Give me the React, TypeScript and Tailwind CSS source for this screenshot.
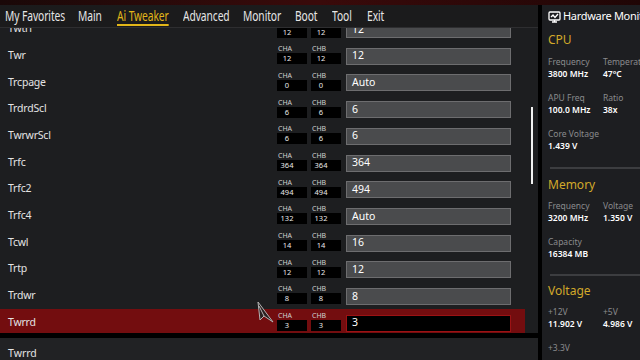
import React from "react"

const rows: [string, string, string, string][] = [
  ["Twtrl", "12", "12", "12"],
  ["Twr", "12", "12", "12"],
  ["Trcpage", "0", "0", "Auto"],
  ["TrdrdScl", "6", "6", "6"],
  ["TwrwrScl", "6", "6", "6"],
  ["Trfc", "364", "364", "364"],
  ["Trfc2", "494", "494", "494"],
  ["Trfc4", "132", "132", "Auto"],
  ["Tcwl", "14", "14", "16"],
  ["Trtp", "12", "12", "12"],
  ["Trdwr", "8", "8", "8"],
  ["Twrrd", "3", "3", "3"],
]

// tab label + width of its slot (start positions taken from the screen)
const tabs: [string, string][] = [
  ["My Favorites", "w-[73px]"],
  ["Main", "w-[39px]"],
  ["Ai Tweaker", "w-[66px]"],
  ["Advanced", "w-[60px]"],
  ["Monitor", "w-[52px]"],
  ["Boot", "w-[37px]"],
  ["Tool", "w-[35px]"],
  ["Exit", "w-[40px]"],
]

const Stat = ({ label, value }: { label: string; value: string }) => (
  <div className="w-[55px] shrink-0 flex flex-col">
    <span className="text-[8.5px] leading-[13px] text-[#8a8b8d] whitespace-nowrap">{label}</span>
    <span className="text-[8.5px] leading-[12px] font-semibold text-white whitespace-nowrap">{value}</span>
  </div>
)

const Section = ({ title }: { title: string }) => (
  <div className="text-[12px] leading-[16px] text-[#d2a92a]">{title}</div>
)

const App = () => {
  return (
    <div className="relative w-[640px] h-[360px] overflow-hidden flex flex-col bg-black" style={{ fontFamily: "'Noto Sans', 'Open Sans', sans-serif" }}>
      <div className="h-[5px] bg-gradient-to-r from-[#1a0808] via-[#3a0a0a] to-[#200606]" />
      <div className="flex flex-1 min-h-0">
        {/* left panel */}
        <div className="w-[538px] flex flex-col bg-[#1d1e20]">
          <div className="h-[23px] flex items-center pl-[5px] bg-[#1b1b1c] border-b border-[#2e2e30] text-[13.5px] text-[#e6e6e6] tracking-[-0.1px]">
            {tabs.map(([t, w]) => (
              <div key={t} className={`${w} shrink-0 whitespace-nowrap`}>
                <span
                  className={
                    "inline-block origin-left scale-x-[0.76] leading-[16px] " +
                    (t === "Ai Tweaker" ? "text-[#e2b619] border-b-[2px] border-[#e2b619] mt-[2px]" : "")
                  }
                >
                  {t}
                </span>
              </div>
            ))}
          </div>
          <div className="h-[309px] flex overflow-hidden">
            <div className="w-[525px] flex flex-col mt-[-12px]">
              {rows.map(([name, a, b, val], i) => {
                const sel = i === rows.length - 1
                return (
                  <div key={i} className={`h-[26.7px] shrink-0 flex items-center ${sel ? "bg-[#730d0f]" : ""}`}>
                    <span className="w-[277px] pl-[8px] text-[10.5px] tracking-[-0.2px] text-[#e4e4e4]">{name}</span>
                    {[["CHA", a], ["CHB", b]].map(([c, v]) => (
                      <div key={c} className="w-[34px] flex flex-col mt-[-2px]">
                        <span className="text-[7px] leading-[8px] text-[#cfcfcf] pl-[1px]">{c}</span>
                        <span className="w-[30px] h-[11px] bg-black text-[7.5px] leading-[11px] text-[#e8e8e8] text-center pr-[10px]">{v}</span>
                      </div>
                    ))}
                    <div
                      className={`ml-[1px] w-[165px] h-[17px] mt-[1px] flex items-center pl-[5px] text-[10.5px] text-white border ${
                        sel ? "bg-black border-[#9c1214]" : "bg-[#4a4b4d] border-[#6d6d6f]"
                      }`}
                    >
                      {val}
                    </div>
                  </div>
                )
              })}
            </div>
            <div className="w-[13px] flex">
              <div className="ml-[6px] mt-[79px] w-[2px] h-[77px] bg-[#f2f2f2]" />
            </div>
          </div>
          <div className="h-[5px] bg-black" />
          <div className="flex-1 bg-[#212224] pl-[8px] pt-[8px] text-[10.5px] leading-[14px] text-[#e4e4e4]">Twrrd</div>
        </div>
        <div className="w-[4px] bg-black" />
        {/* right panel */}
        <div className="flex-1 bg-[#1d1e21] pl-[6px] flex flex-col overflow-hidden">
          <div className="h-[23px] flex items-center gap-[2px] whitespace-nowrap text-[11px] tracking-[-0.3px] text-white">
            <svg className="shrink-0" width="13" height="12" viewBox="0 0 13 12" fill="none" stroke="white" strokeWidth="1.3">
              <rect x="1" y="1" width="11" height="8" rx="1" />
              <path d="M3 6 L5 4 L7 6.5 L10 3" />
              <path d="M6.5 9 V11 M4 11 H9" />
            </svg>
            <span>Hardware Monitor</span>
          </div>
          <div className="mt-[4px]"><Section title="CPU" /></div>
          <div className="flex mt-[7px]">
            <Stat label="Frequency" value="3800 MHz" />
            <Stat label="Temperature" value="47°C" />
          </div>
          <div className="flex mt-[11px]">
            <Stat label="APU Freq" value="100.0 MHz" />
            <Stat label="Ratio" value="38x" />
          </div>
          <div className="flex mt-[11px]">
            <Stat label="Core Voltage" value="1.439 V" />
          </div>
          <div className="h-[2px] bg-[#3c3d40] mt-[15px] ml-[2px]" />
          <div className="mt-[8px]"><Section title="Memory" /></div>
          <div className="flex mt-[6px]">
            <Stat label="Frequency" value="3200 MHz" />
            <Stat label="Voltage" value="1.350 V" />
          </div>
          <div className="flex mt-[11px]">
            <Stat label="Capacity" value="16384 MB" />
          </div>
          <div className="h-[2px] bg-[#3c3d40] mt-[14px] ml-[2px]" />
          <div className="mt-[7px]"><Section title="Voltage" /></div>
          <div className="flex mt-[6px]">
            <Stat label="+12V" value="11.902 V" />
            <Stat label="+5V" value="4.986 V" />
          </div>
          <div className="flex mt-[11px]">
            <Stat label="+3.3V" value="" />
          </div>
        </div>
      </div>
      {/* mouse pointer */}
      <svg className="absolute left-[255px] top-[300px]" width="20" height="24" viewBox="0 0 20 24" fill="none" stroke="#b5b5b5" strokeWidth="1">
        <path d="M3 2 L5 20 L9 16 L18 22 Z" fill="#2a2020" />
        <path d="M4 6 L9 16" />
      </svg>
    </div>
  )
}

export default App
